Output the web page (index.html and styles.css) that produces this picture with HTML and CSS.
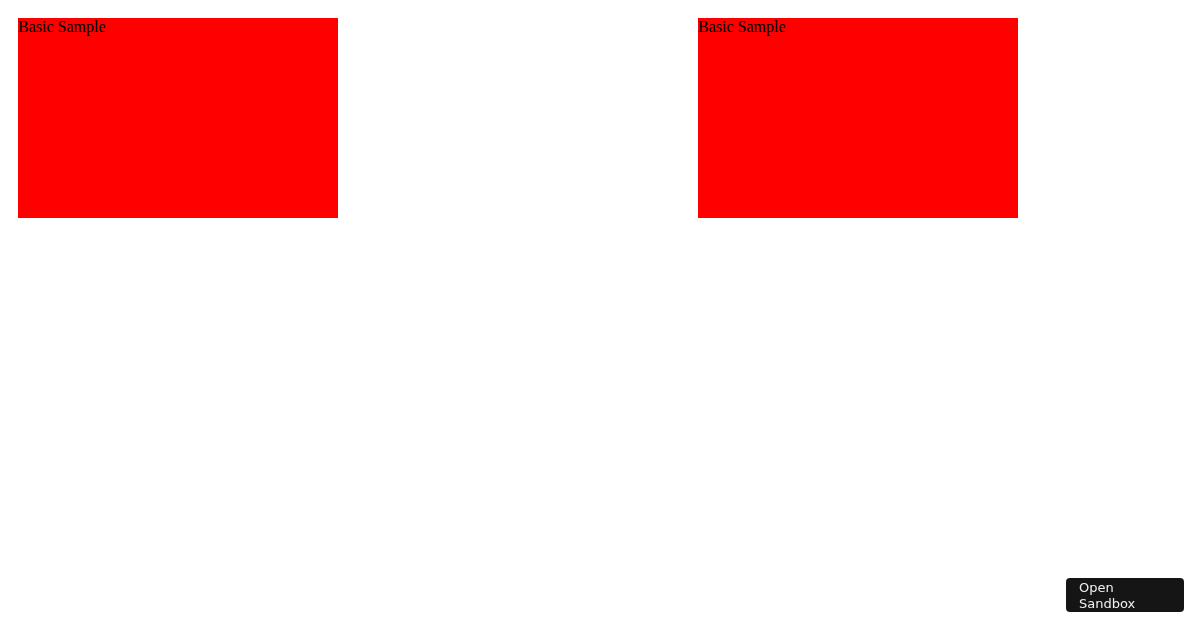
FILE: index.html
```html
<!DOCTYPE html>
<html>
<head>
<meta charset="utf-8">
<link rel="stylesheet" href="styles.css">
</head>
<body>
<div class="row">
  <div class="sample">Basic Sample</div>
  <div class="sample">Basic Sample</div>
</div>
<button class="sandbox">Open Sandbox</button>
</body>
</html>
```
FILE: styles.css
```css
html, body {
  margin: 0;
  background: #ffffff;
}
body {
  padding: 18px;
  font-family: "Liberation Serif", "Times New Roman", serif;
  font-size: 16px;
  color: #000;
}
.row {
  display: flex;
  gap: 360px;
}
.sample {
  width: 320px;
  height: 200px;
  background: #ff0000;
  line-height: 17px;
}
.sandbox {
  position: fixed;
  right: 16px;
  bottom: 18px;
  width: 118px;
  height: 34px;
  box-sizing: border-box;
  padding: 2px 12px 0 13px;
  border: none;
  border-radius: 4px;
  background: #151515;
  color: #f0f0f0;
  font-family: "DejaVu Sans", Verdana, sans-serif;
  font-size: 13px;
  line-height: 16px;
  text-align: left;
}
```
